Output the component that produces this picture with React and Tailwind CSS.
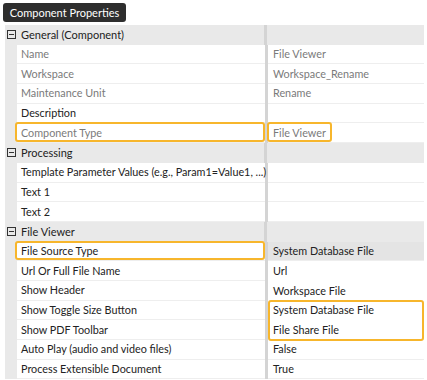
import React from 'react';

const sections = [
  {
    title: 'General (Component)',
    rows: [
      { label: 'Name', value: 'File Viewer', muted: true },
      { label: 'Workspace', value: 'Workspace_Rename', muted: true },
      { label: 'Maintenance Unit', value: 'Rename', muted: true },
      { label: 'Description', value: '' },
      { label: 'Component Type', value: 'File Viewer', muted: true, markLabel: true, markValue: true },
    ],
  },
  {
    title: 'Processing',
    rows: [
      { label: 'Template Parameter Values (e.g., Param1=Value1, ...)', value: '' },
      { label: 'Text 1', value: '' },
      { label: 'Text 2', value: '' },
    ],
  },
  {
    title: 'File Viewer',
    rows: [
      { label: 'File Source Type', value: 'System Database File', markLabel: true, selected: true },
      { label: 'Url Or Full File Name', value: 'Url', list: true },
      { label: 'Show Header', value: 'Workspace File', list: true },
      { label: 'Show Toggle Size Button', value: 'System Database File', list: true, boxTop: true },
      { label: 'Show PDF Toolbar', value: 'File Share File', list: true },
      { label: 'Auto Play (audio and video files)', value: 'False' },
      { label: 'Process Extensible Document', value: 'True' },
    ],
  },
];

const CollapseIcon = () => (
  <svg width="9" height="9" viewBox="0 0 9 9" className="shrink-0">
    <rect x="0.5" y="0.5" width="8" height="8" fill="none" stroke="#333" strokeWidth="1" />
    <line x1="2" y1="4.5" x2="7" y2="4.5" stroke="#333" strokeWidth="1" />
  </svg>
);

const Row = ({ row }) => (
  <div className="flex h-[19.7px]">
    <div className="w-[12px] shrink-0 bg-[#e9e9e9]" />
    <div className="relative flex w-[248px] shrink-0 items-center border-b border-[#eeeeee] pl-[4px]">
      <span className={`whitespace-nowrap ${row.muted ? 'text-[#7a7a7a]' : 'text-[#222]'}`}>{row.label}</span>
      {row.markLabel && (
        <span className="absolute -left-[2px] right-0 top-[-1px] bottom-0 rounded-[3px] border-2 border-[#f7b62c]" />
      )}
    </div>
    <div className="w-[3px] shrink-0 bg-[#d4d4d4]" />
    <div
      className={`relative flex flex-1 items-center pl-[5px] ${
        row.list ? '' : 'border-b border-[#eeeeee]'
      } ${row.selected ? 'bg-[#e4e4e4]' : ''}`}
    >
      <span className={`whitespace-nowrap ${row.muted ? 'text-[#7a7a7a]' : 'text-[#222]'}`}>{row.value}</span>
      {row.markValue && (
        <span className="absolute -left-[1px] w-[65px] top-[-1px] bottom-0 rounded-[3px] border-2 border-[#f7b62c]" />
      )}
      {row.boxTop && (
        <span className="absolute left-0 right-0 top-[-1px] h-[41px] rounded-[3px] border-2 border-[#f7b62c]" />
      )}
    </div>
  </div>
);

export default function App() {
  return (
    <div
      className="h-[380px] w-[427px] overflow-hidden bg-white text-[10.8px] leading-[16px]"
      style={{ fontFamily: 'Lato, "Noto Sans", sans-serif' }}
    >
      <div className="pl-[3px] pt-[3px]">
        <div className="inline-flex h-[19px] w-[123px] items-center justify-center rounded-[3px] bg-[#2e2e2e] text-[11px] text-white">
          Component Properties
        </div>
      </div>
      <div className="ml-[5px] mr-[3px] mt-[3px]">
        {sections.map((s) => (
          <div key={s.title}>
            <div className="flex h-[19.7px] items-center gap-[5px] bg-[#e9e9e9] pl-[2px] text-[#222]">
              <CollapseIcon />
              <span className="whitespace-nowrap text-[11px]">{s.title}</span>
              <div className="ml-auto h-full w-[3px] bg-[#d4d4d4] mr-[157px]" />
            </div>
            {s.rows.map((r) => (
              <Row key={r.label} row={r} />
            ))}
          </div>
        ))}
      </div>
    </div>
  );
}
